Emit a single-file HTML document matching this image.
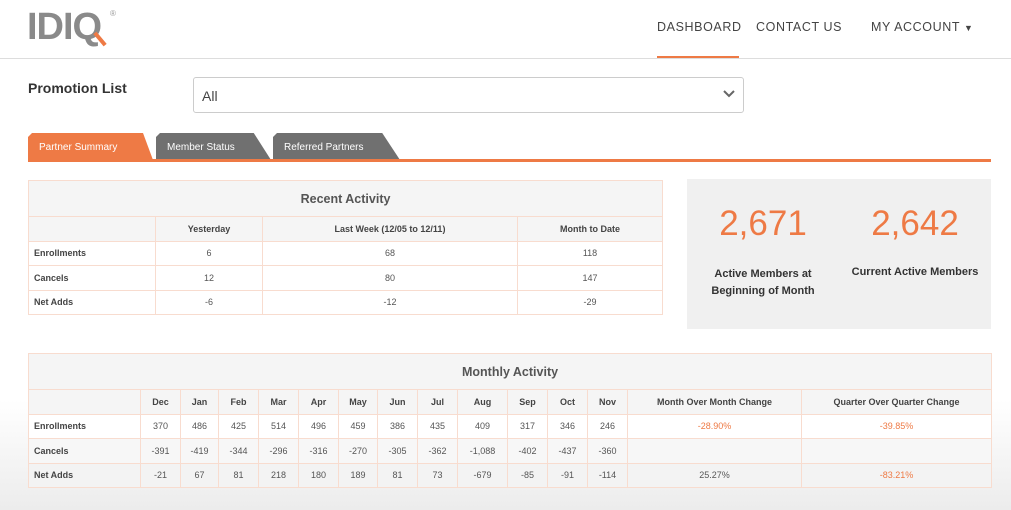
<!DOCTYPE html>
<html><head><style>
*{margin:0;padding:0;box-sizing:border-box}
body{width:1011px;height:510px;overflow:hidden;font-family:"Liberation Sans",sans-serif;background:linear-gradient(#fff 0,#fff 400px,#ececec 510px);position:relative;color:#444}
.a{position:absolute}
.nav{font-size:12.5px;letter-spacing:0.6px;color:#444;top:20px}
table{border-collapse:collapse;position:absolute;table-layout:fixed;font-size:9px;color:#555}
td{border:1px solid #f8dccf;text-align:center;height:24.5px;padding:0}
td.l{text-align:left;padding-left:5px;font-weight:bold;color:#444}
tr.h td{font-weight:bold;color:#444;background:#f5f5f5}
td.t{font-size:12.5px;font-weight:bold;background:#f5f5f5;height:36px;color:#555}
.o{color:#ee7a45}
.tab{position:absolute;top:133px;height:27px;font-size:10px;color:#fff;padding:9px 0 0 11px}
</style></head><body>
<div class="a" style="left:27px;top:6px;font-size:38px;font-weight:bold;color:#8a8a8a;letter-spacing:-1px">IDIQ</div>
<div class="a" style="left:98px;top:31px;width:4px;height:16px;background:#ee7a45;transform:rotate(-40deg)"></div>
<div class="a" style="left:110px;top:9px;font-size:8px;color:#999">®</div>
<div class="a nav" style="left:657px">DASHBOARD</div>
<div class="a" style="left:657px;top:56px;width:82px;height:2px;background:#ee7a45"></div>
<div class="a nav" style="left:756px">CONTACT US</div>
<div class="a nav" style="left:871px">MY ACCOUNT <span style="font-size:9px">▼</span></div>
<div class="a" style="left:0;top:58px;width:1011px;height:1px;background:#ddd"></div>
<div class="a" style="left:28px;top:80px;font-size:14px;font-weight:bold;color:#333">Promotion List</div>
<div class="a" style="left:193px;top:77px;width:551px;height:36px;border:1px solid #ccc;border-radius:3px;font-size:14px;padding:10px 0 0 8px;color:#444">All<svg style="position:absolute;right:8px;top:12px" width="12" height="8" viewBox="0 0 12 8"><path d="M1 1l5 5 5-5" fill="none" stroke="#666" stroke-width="2"/></svg></div>
<div class="tab" style="left:28px;width:125px;background:#ee7a45;clip-path:polygon(0 4px,4px 0,92% 0,100% 100%,0 100%)">Partner Summary</div>
<div class="tab" style="left:156px;width:115px;background:#707070;clip-path:polygon(0 4px,4px 0,85% 0,100% 100%,0 100%)">Member Status</div>
<div class="tab" style="left:273px;width:127px;background:#707070;clip-path:polygon(0 4px,4px 0,86% 0,100% 100%,0 100%)">Referred Partners</div>
<div class="a" style="left:28px;top:159px;width:963px;height:3px;background:#ee7a45"></div>

<table style="left:28px;top:180px;width:634px">
<colgroup><col style="width:127px"><col style="width:107px"><col style="width:255px"><col style="width:145px"></colgroup>
<tr><td class="t" colspan="4">Recent Activity</td></tr>
<tr class="h"><td></td><td>Yesterday</td><td>Last Week (12/05 to 12/11)</td><td>Month to Date</td></tr>
<tr><td class="l">Enrollments</td><td>6</td><td>68</td><td>118</td></tr>
<tr><td class="l">Cancels</td><td>12</td><td>80</td><td>147</td></tr>
<tr><td class="l">Net Adds</td><td>-6</td><td>-12</td><td>-29</td></tr>
</table>

<div class="a" style="left:687px;top:179px;width:304px;height:150px;background:#f0f0f0"></div>
<div class="a o" style="left:687px;top:204px;width:152px;text-align:center;font-size:35px">2,671</div>
<div class="a o" style="left:839px;top:204px;width:152px;text-align:center;font-size:35px">2,642</div>
<div class="a" style="left:687px;top:266px;width:152px;text-align:center;font-size:11px;font-weight:bold;line-height:17px;color:#333">Active Members at<br>Beginning of Month</div>
<div class="a" style="left:839px;top:266px;width:152px;text-align:center;font-size:11px;font-weight:bold;color:#333">Current Active Members</div>

<table style="left:28px;top:353px;width:963px">
<colgroup><col style="width:112px"><col style="width:40px"><col style="width:38px"><col style="width:40px"><col style="width:40px"><col style="width:40px"><col style="width:39px"><col style="width:40px"><col style="width:40px"><col style="width:50px"><col style="width:40px"><col style="width:40px"><col style="width:40px"><col style="width:174px"><col style="width:190px"></colgroup>
<tr><td class="t" colspan="15">Monthly Activity</td></tr>
<tr class="h"><td></td><td>Dec</td><td>Jan</td><td>Feb</td><td>Mar</td><td>Apr</td><td>May</td><td>Jun</td><td>Jul</td><td>Aug</td><td>Sep</td><td>Oct</td><td>Nov</td><td>Month Over Month Change</td><td>Quarter Over Quarter Change</td></tr>
<tr style="background:#fff"><td class="l">Enrollments</td><td>370</td><td>486</td><td>425</td><td>514</td><td>496</td><td>459</td><td>386</td><td>435</td><td>409</td><td>317</td><td>346</td><td>246</td><td class="o">-28.90%</td><td class="o">-39.85%</td></tr>
<tr style="background:#f7f7f7"><td class="l">Cancels</td><td>-391</td><td>-419</td><td>-344</td><td>-296</td><td>-316</td><td>-270</td><td>-305</td><td>-362</td><td>-1,088</td><td>-402</td><td>-437</td><td>-360</td><td></td><td></td></tr>
<tr style="background:#f3f3f3"><td class="l">Net Adds</td><td>-21</td><td>67</td><td>81</td><td>218</td><td>180</td><td>189</td><td>81</td><td>73</td><td>-679</td><td>-85</td><td>-91</td><td>-114</td><td>25.27%</td><td class="o">-83.21%</td></tr>
</table>
</body></html>
